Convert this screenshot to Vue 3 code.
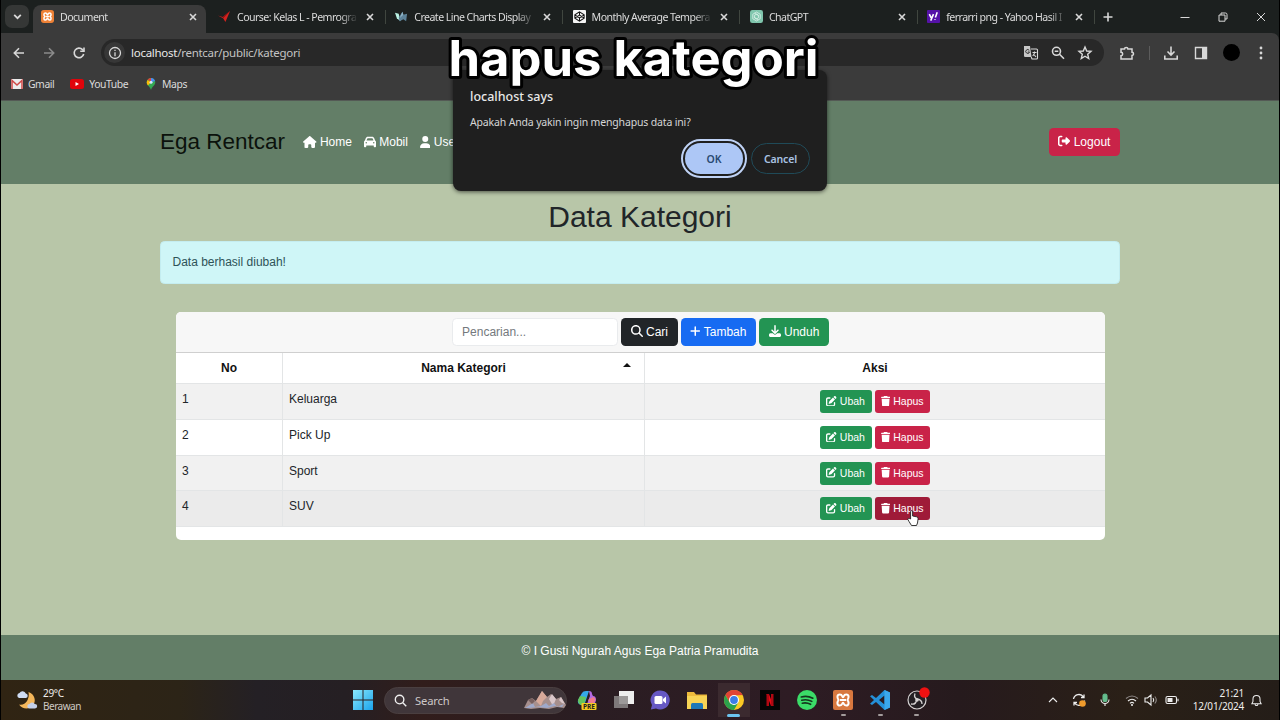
<template>
  <div class="desktop">
    <div class="browser">
      <div class="tab-strip">
        <div class="tab-search">
          <svg viewBox="0 0 10 10" class="ln"><path d="M2 3.5l3 3 3-3" /></svg>
        </div>
        <div v-for="tab in tabs" :key="tab.title" class="tab" :class="{ active: tab.active }">
          <svg v-if="tab.icon === 'xampp'" class="favicon" viewBox="0 0 14 14">
            <rect width="14" height="14" rx="3" fill="#ee8136" />
            <path d="M4.8 3.2c-2 0-2 2.3-.9 3.8-1.100 1.500-1.100 3.800.9 3.800s1.400-1.900 2.200-1.900.2 1.900 2.200 1.900 2-2.300.9-3.800c1.100-1.500 1.100-3.800-.9-3.800S7.800 5.100 7 5.100 6.800 3.200 4.800 3.200zM5 7h4" fill="none" stroke="#fff" stroke-width="1.600" />
          </svg>
          <svg v-else-if="tab.icon === 'course'" class="favicon" viewBox="0 0 14 14">
            <path d="M0 6l5 1.500L13 1 8 13 5.500 9z" fill="#d3221f" />
            <path d="M5 7.500L13 1 5.500 9z" fill="#7e1010" />
          </svg>
          <svg v-else-if="tab.icon === 'chart'" class="favicon" viewBox="0 0 14 14">
            <path d="M0 3l4 1 2 8-4-3z" fill="#b9f0e2" />
            <path d="M4 8l4-6 1 3 4-1-1 8-3-2-4 2z" fill="#5d8299" />
            <path d="M8 2l1 3-4 4z" fill="#8eb3c6" />
          </svg>
          <svg v-else-if="tab.icon === 'codepen'" class="favicon" viewBox="0 0 14 14">
            <rect width="14" height="14" rx="1" fill="#f4f4f4" />
            <path d="M7 2l5 3.200v3.600L7 12 2 8.800V5.200zM2 5.200l5 3.400 5-3.400M2 8.800l5-3.400 5 3.400M7 2v3.400M7 8.600V12" fill="none" stroke="#111" stroke-width="1.100" />
          </svg>
          <svg v-else-if="tab.icon === 'gpt'" class="favicon" viewBox="0 0 14 14">
            <rect width="14" height="14" rx="2.500" fill="#80c6ad" />
            <g fill="none" stroke="#e4f6ef" stroke-width=".8">
              <path d="M7 2.200l4 2.400v4.800l-4 2.400-4-2.400V4.600z" />
              <path d="M7 4.500l2.200 1.300v2.500L7 9.600 4.800 8.300V5.800zM5 3.500l4.200 2.400M9 10.500L4.800 8.100" />
            </g>
          </svg>
          <svg v-else class="favicon" viewBox="0 0 14 14">
            <rect width="14" height="14" rx="1" fill="#5512a8" />
            <path d="M2.500 4.500l2 4M7 4.500L4 11.500M9 8l2-5.500M8.600 9.600v1" fill="none" stroke="#fff" stroke-width="1.700" />
          </svg>
          <span class="tab-title">{{ tab.title }}</span>
          <svg class="tab-close" viewBox="0 0 8 8"><path d="M1 1l6 6M7 1L1 7" /></svg>
        </div>
        <svg class="new-tab" viewBox="0 0 10 10"><path d="M5 .5v9M.5 5h9" /></svg>
        <div class="window-controls">
          <svg viewBox="0 0 10 10"><path d="M.5 5.500h9" /></svg>
          <svg viewBox="0 0 10 10"><path d="M1 3h6v6.200H1zM3 3V1h4.500Q9 1 9 2.500V7H7" /></svg>
          <svg viewBox="0 0 10 10"><path d="M1 1l8 8M9 1L1 9" /></svg>
        </div>
      </div>

      <div class="toolbar">
        <svg class="tool" viewBox="0 0 16 16"><path d="M13 8H3.500M8 3.300L3.300 8 8 12.700" /></svg>
        <svg class="tool dim" viewBox="0 0 16 16"><path d="M3 8h9.500M8 3.300L12.700 8 8 12.700" /></svg>
        <svg class="tool" viewBox="0 0 16 16">
          <path d="M12.700 9A4.800 4.800 0 1 1 11.500 4.600L12.700 5.800" />
          <path d="M13 2.500v3.800H9.200" />
        </svg>
        <div class="omnibox">
          <span class="site-info">
            <svg viewBox="0 0 14 14"><circle cx="7" cy="7" r="5.500" /><path d="M7 6.300v4M7 3.700v1.300" /></svg>
          </span>
          <span class="url"><b>localhost</b>/rentcar/public/kategori</span>
          <svg class="box-icon" viewBox="0 0 16 16">
            <path d="M1 1h6l1.500 11H2.200Q1 12 1 11z" fill="#c8c8c8" stroke="none" />
            <path d="M8 4h5.500q1 0 1 1v8q0 1-1 1H9l-.8-2M9.500 7.500h4M11.500 6.500v1c0 1.600-1 2.600-1.800 3.300M10.500 9l2.500 3" stroke-width="1.100" />
            <path d="M6.300 5.500A1.900 1.900 0 1 0 6.500 7H4.800" stroke="#333" stroke-width="1" />
          </svg>
          <svg class="box-icon" viewBox="0 0 16 16"><circle cx="6.500" cy="6.300" r="4" /><path d="M9.500 9.300l4.500 4.500M4.700 6.300h3.600" /></svg>
          <svg class="box-icon" viewBox="0 0 16 16">
            <path d="M8 2l1.700 4 4.300.4-3.300 2.800 1 4.300L8 11.200l-3.700 2.300 1-4.300L2 6.400 6.300 6z" stroke-width="1.400" />
          </svg>
        </div>
        <svg class="ext" viewBox="0 0 16 16">
          <path d="M2 4h3.500a1.700 1.500 0 0 1 3.400 0H13v3.200a1.500 1.600 0 0 1 0 3.200V14H2v-3.300a1.700 1.700 0 0 0 0-3.400z" stroke-width="1.500" />
        </svg>
        <span class="tool-sep"></span>
        <svg class="side-icon" viewBox="0 0 16 16"><path d="M8 1.500v8.300M4.500 6.500L8 10l3.500-3.500M1.800 10.500V14h12.400v-3.500" /></svg>
        <svg class="side-icon" viewBox="0 0 16 16">
          <path d="M2.500 2.500h11v11h-11z" stroke-width="1.400" /><path d="M9 2.500h4.500v11H9z" fill="#d8d8d8" stroke="none" />
        </svg>
        <span class="avatar"></span>
        <svg class="side-icon" viewBox="0 0 16 16">
          <g fill="#d8d8d8" stroke="none"><circle cx="8" cy="3" r="1.400" /><circle cx="8" cy="8" r="1.400" /><circle cx="8" cy="13" r="1.400" /></g>
        </svg>
      </div>

      <div class="bookmarks">
        <span class="bookmark">
          <svg viewBox="0 0 12 12"><rect y="1" width="12" height="10" rx="1" fill="#ececec" /><path d="M1 11V2.500L6 7l5-4.500V11" fill="none" stroke="#cf4a48" stroke-width="1.500" /></svg>
          Gmail
        </span>
        <span class="bookmark youtube">
          <svg viewBox="0 0 14 12"><rect y="1" width="14" height="10" rx="2.500" fill="#e0040b" /><path d="M5.500 4v4L9 6z" fill="#fff" /></svg>
          YouTube
        </span>
        <span class="bookmark maps">
          <svg viewBox="0 0 12 12">
            <path d="M6 0a4.300 4.300 0 0 1 4.300 4.300C10.300 7.500 7 8.500 6 12 5 8.500 1.700 7.500 1.700 4.300A4.300 4.300 0 0 1 6 0z" fill="#34a853" />
            <path d="M6 0a4.300 4.300 0 0 1 4 3L6 4.300z" fill="#4a8bf5" />
            <path d="M2.500 1.700A4.300 4.300 0 0 1 6 0v4z" fill="#e34434" />
            <path d="M1.700 4.300Q1.700 6 3 7.500L6 4.300 2.500 2z" fill="#fbbc04" />
            <circle cx="6" cy="4.200" r="1.500" fill="#dbe7ff" />
          </svg>
          Maps
        </span>
      </div>
    </div>

    <div class="page">
      <nav class="navbar">
        <span class="brand">Ega Rentcar</span>
        <a class="nav-link"><Fa name="house" /> Home</a>
        <a class="nav-link"><Fa name="car" /> Mobil</a>
        <a class="nav-link"><Fa name="user" /> User</a>
        <a class="btn danger logout"><Fa name="logout" /> Logout</a>
      </nav>

      <main>
        <h1>Data Kategori</h1>
        <div class="alert">Data berhasil diubah!</div>
        <section class="card">
          <div class="card-header">
            <input type="text" placeholder="Pencarian..." />
            <a class="btn dark"><Fa name="search" /> Cari</a>
            <a class="btn primary"><Fa name="plus" /> Tambah</a>
            <a class="btn success"><Fa name="download" /> Unduh</a>
          </div>
          <table>
            <thead>
              <tr>
                <th class="col-no">No</th>
                <th class="col-name">Nama Kategori<i class="sort"></i></th>
                <th>Aksi</th>
              </tr>
            </thead>
            <tbody>
              <tr v-for="(nama, i) in kategori" :key="nama" :class="{ hover: i === hovered }">
                <td>{{ i + 1 }}</td>
                <td>{{ nama }}</td>
                <td class="actions">
                  <div class="action-group">
                    <a class="btn sm success"><Fa name="edit" /> Ubah</a>
                    <a class="btn sm danger" :class="{ pressed: i === hovered }"><Fa name="trash" /> Hapus</a>
                  </div>
                </td>
              </tr>
            </tbody>
          </table>
        </section>
      </main>

      <footer>© I Gusti Ngurah Agus Ega Patria Pramudita</footer>
    </div>

    <div class="taskbar">
      <div class="weather">
        <svg viewBox="0 0 22 20">
          <path d="M12.500 1.500c6 2 8.500 9 4 14-4 4-10.500 3-13.500-1.500 6 1.500 11-5 9.500-12.500z" fill="#f3b65a" />
          <path d="M3 7.500a2.600 2.600 0 0 1 .5-5A3.500 3.500 0 0 1 9.800 3 2.300 2.300 0 0 1 10 7.500z" fill="#cfdcf3" />
          <path d="M13.500 18a2.200 2.200 0 0 1 0-4.400 3 3 0 0 1 5.300-.2A2.300 2.300 0 0 1 19 18z" fill="#c3cfe9" />
        </svg>
        <div>
          <div>29°C</div>
          <div class="sky">Berawan</div>
        </div>
      </div>

      <svg class="start" viewBox="0 0 20 20">
        <defs><linearGradient id="win" x2="1" y2="1"><stop stop-color="#8be8fb" /><stop offset="1" stop-color="#1aa3ec" /></linearGradient></defs>
        <path d="M0 0h9.500v9.500H0zM10.500 0H20v9.500h-9.500zM0 10.500h9.500V20H0zM10.500 10.500H20V20h-9.500z" fill="url(#win)" />
      </svg>

      <div class="search">
        <svg class="lens" viewBox="0 0 14 14"><circle cx="6" cy="6" r="4.600" /><path d="M9.500 9.500l3.700 3.700" /></svg>
        <span>Search</span>
        <svg class="peaks" viewBox="0 0 42 20">
          <path d="M0 18l4-8 4-2 4 3 6-10 5 6 4-3 5 5 5-2 5 8-2 3-7-1-8 2-9-1-9 1z" fill="#a68f8d" />
          <path d="M12 11l6-10 5 6-4 4-2 5z" fill="#d8a999" />
          <path d="M25 9l3-5 4 5-3 7zM35 10l2-3 4 7-3-1z" fill="#d9c6c9" />
          <path d="M1 18l8-5 2 4 6-1 5-3 3 3 5-3 3 4 7-3-2 3-7-1-8 2-9-1-9 1z" fill="#9fa9cb" />
          <path d="M4 10l4-2 3 3-3 3z" fill="#78605f" />
        </svg>
      </div>

      <div class="apps">
        <span class="app">
          <svg viewBox="0 0 20 20">
            <path d="M5 3q1-2 4-2h3L8 13q-1 3-4 2-4-1-3-5z" fill="#35a9e8" />
            <path d="M1 10l2-4 6 1-2 8q-6 1-6-5z" fill="#65c45b" />
            <path d="M12 1q3 0 3 3l1 2q3 0 3 4-1 6-6 5l-3-1 3-8z" fill="#b36ae3" />
            <path d="M11 10l5-3q3 1 2 4l-3 4z" fill="#f17c8c" />
            <rect x="4.500" y="13" width="15" height="7" rx="1" fill="#f6ca22" />
            <text x="12" y="18.800" text-anchor="middle" class="pre">PRE</text>
          </svg>
        </span>
        <span class="app">
          <svg viewBox="0 0 20 20"><rect x="5" y="1" width="15" height="13" fill="#eee" /><rect y="6" width="14" height="12" fill="#8d8989" opacity=".85" /></svg>
        </span>
        <span class="app">
          <svg viewBox="0 0 20 20">
            <path d="M10 .5a9.500 9.500 0 1 1-4 18L.8 19.500 2 15A9.500 9.500 0 0 1 10 .5z" fill="#6658c4" />
            <rect x="4.500" y="6" width="8" height="8" rx="1.500" fill="#fff" /><path d="M13 9l3-2.500v7L13 11z" fill="#fff" />
          </svg>
        </span>
        <span class="app">
          <svg viewBox="0 0 20 20">
            <path d="M0 2h7l2 2.500h11V19H0z" fill="#eebb3c" /><path d="M0 6h20v13H0z" fill="#f7d456" />
            <path d="M4 19v-4.500Q4 13 5.500 13h9q1.500 0 1.500 1.500V19z" fill="#1d78b8" />
          </svg>
        </span>
        <span class="app current">
          <svg viewBox="0 0 20 20">
            <circle cx="10" cy="10" r="10" fill="#fbc924" />
            <path d="M1.340 5A10 10 0 0 1 18.660 5L10 5.500 5.700 12.500z" fill="#e04435" />
            <path d="M1.340 5A10 10 0 0 0 10 20L14.330 12.500 5.670 12.500z" fill="#2ba24c" />
            <circle cx="10" cy="10" r="5" fill="#fff" /><circle cx="10" cy="10" r="3.900" fill="#3b7de8" />
          </svg>
        </span>
        <span class="app">
          <svg viewBox="0 0 20 20"><rect width="20" height="20" fill="#050505" /><path d="M6.500 4H9l4.500 12H11z" fill="#e50914" /><path d="M6.500 4H9v12H6.500zM11 4h2.500v12H11z" fill="#b00812" /></svg>
        </span>
        <span class="app">
          <svg viewBox="0 0 20 20">
            <circle cx="10" cy="10" r="10" fill="#3bdc68" />
            <path d="M4.300 7q6-1.600 11.600 1.200M4.800 10.200q5.200-1.400 10 1.200M5.300 13.200q4.400-1 8.300 1.100" fill="none" stroke="#15351d" stroke-width="1.600" stroke-linecap="round" />
          </svg>
        </span>
        <span class="app open">
          <svg viewBox="0 0 20 20">
            <rect width="20" height="20" rx="2" fill="#d8783f" />
            <path d="M6.800 4.500c-3 0-2.800 3.300-1.300 5.500-1.500 2.200-1.700 5.500 1.300 5.500s2-2.700 3.200-2.700.2 2.700 3.200 2.700 2.800-3.300 1.300-5.500c1.500-2.200 1.700-5.500-1.300-5.500S11.200 7.200 10 7.200 9.800 4.500 6.800 4.500zM7 10h6" fill="none" stroke="#fff" stroke-width="2" />
          </svg>
        </span>
        <span class="app open">
          <svg viewBox="0 0 20 20">
            <path d="M14.500 0L20 2.500v15L14.500 20 6 12l-4 3-2-1.200L4 10 0 6.200 2 5l4 3zM14.500 5.500L9 10l5.500 4.500z" fill="#2490d8" fill-rule="evenodd" />
            <path d="M14.500 0L20 2.500v15L14.500 20z" fill="#3ba8ec" />
          </svg>
        </span>
        <span class="app open">
          <svg viewBox="0 0 20 20" class="obs">
            <circle cx="10" cy="10" r="9" fill="#242024" stroke="#d5d2d2" stroke-width="1.200" />
            <path d="M8 3.500q-1.500 4.500 2.500 5.500M10.500 9q4.500 1 4.500 5M9.500 10.500q-1 4.500-5.500 3.500" fill="none" stroke="#d5d2d2" stroke-width="1.300" />
            <circle cx="10" cy="10" r="1.800" fill="#d5d2d2" />
            <circle cx="17.500" cy="2.500" r="5.200" fill="#ee1111" />
          </svg>
        </span>
      </div>

      <div class="tray">
        <svg viewBox="0 0 14 14"><path d="M3 9l4-4 4 4" /></svg>
        <svg viewBox="0 0 14 14">
          <path d="M1.500 6A5.500 5.500 0 0 1 11.500 4M12 1.500V4.500H9M12.500 7.500A5.500 5.500 0 0 1 2.500 10M2 12.500V9.500h3" stroke-width="1.300" />
          <circle cx="10.500" cy="10.500" r="3.300" fill="#ef9b2c" stroke="none" />
        </svg>
        <svg viewBox="0 0 14 14"><rect x="5" y="1" width="4" height="7.500" rx="2" fill="#64bd8d" stroke="#64bd8d" /><path d="M3 6.500a4 4 0 0 0 8 0M7 10.500V13" /></svg>
        <svg class="wifi" viewBox="0 0 14 14">
          <path d="M1 5.500Q7 .5 13 5.500" stroke="#8d8785" /><path d="M3 8q4-3.500 8 0M5 10.300q2-1.800 4 0" />
          <circle cx="7" cy="12" r="1" fill="#eee" stroke="none" />
        </svg>
        <svg class="sound" viewBox="0 0 14 14"><path d="M1 5h2.500L7 2v10L3.500 9H1zM9 5q1.500 2 0 4" /><path d="M10.800 3.500q3 3.500 0 7" stroke="#8d8785" /></svg>
        <svg class="battery" viewBox="0 0 14 14"><rect x="1" y="3.500" width="10.500" height="7" rx="1.500" /><path d="M2.500 5h5v4h-5z" fill="#eee" stroke="none" /><path d="M13 5.800v2.400" /></svg>
        <div class="clock">
          <div>21:21</div>
          <div>12/01/2024</div>
        </div>
        <svg class="bell" viewBox="0 0 14 14"><path d="M2 10.500L3.200 8V5.500a3.800 3.800 0 0 1 7.600 0V8l1.200 2.500zM5.500 11a1.500 1.500 0 0 0 3 0" /></svg>
      </div>
    </div>

    <div class="dialog">
      <div class="dialog-title">localhost says</div>
      <p>Apakah Anda yakin ingin menghapus data ini?</p>
      <div class="dialog-buttons">
        <button class="ok">OK</button>
        <button class="cancel">Cancel</button>
      </div>
    </div>

    <svg class="caption" viewBox="0 0 400 70">
      <text x="8.500" y="46" textLength="370" lengthAdjust="spacingAndGlyphs">hapus kategori</text>
    </svg>

    <svg class="cursor" viewBox="0 0 12 16">
      <path d="M3.600 9V1.800q0-1.200 1-1.200t1 1.200V6l4 .8q1.700.4 1.500 2L10.500 13 9.500 15.500h-5L2 11.500.8 9.300q.2-1.400 1.600-.8z" fill="#fff" stroke="#222" stroke-width=".9" />
    </svg>
  </div>
</template>

<script setup>
import { h } from 'vue';

const tabs = [
  { title: 'Document', icon: 'xampp', active: true },
  { title: 'Course: Kelas L - Pemrogra', icon: 'course' },
  { title: 'Create Line Charts Display', icon: 'chart' },
  { title: 'Monthly Average Tempera', icon: 'codepen' },
  { title: 'ChatGPT', icon: 'gpt' },
  { title: 'ferrarri png - Yahoo Hasil I', icon: 'yahoo' },
];

const kategori = ['Keluarga', 'Pick Up', 'Sport', 'SUV'];
const hovered = 3;

// [ancho del viewBox, path]
const glyphs = {
  house: [576, 'M575.8 255.5c0 18-15 32.1-32 32.1h-32l.7 160.2c0 2.700-.2 5.400-.5 8.100V472c0 22.100-17.900 40-40 40H456c-1.100 0-2.200 0-3.300-.1c-1.400 .1-2.800 .1-4.200 .1H416 392c-22.100 0-40-17.900-40-40V448 384c0-17.700-14.300-32-32-32H256c-17.700 0-32 14.300-32 32v64 24c0 22.100-17.900 40-40 40H160 128.100c-1.500 0-3-.1-4.500-.2c-1.200 .1-2.400 .2-3.600 .2H104c-22.100 0-40-17.900-40-40V360c0-.9 0-1.900 .1-2.800V287.600H32c-18 0-32-14-32-32.100c0-9 3-17 10-24L266.400 8c7-7 15-8 22-8s15 2 21 7L564.800 231.500c8 7 12 15 11 24z'],
  car: [512, 'M135.2 117.4L109.1 192H402.9l-26.1-74.6C372.3 104.6 360.2 96 346.6 96H165.4c-13.6 0-25.7 8.6-30.2 21.4zM39.6 196.8L74.8 96.3C88.3 57.8 124.6 32 165.4 32H346.6c40.8 0 77.1 25.8 90.6 64.3l35.2 100.5c23.2 9.6 39.6 32.5 39.6 59.2V400v48c0 17.7-14.3 32-32 32H448c-17.7 0-32-14.3-32-32V400H96v48c0 17.7-14.3 32-32 32H32c-17.7 0-32-14.3-32-32V400 256c0-26.7 16.4-49.6 39.6-59.2zM128 288a32 32 0 1 0 -64 0 32 32 0 1 0 64 0zm288 32a32 32 0 1 0 0-64 32 32 0 1 0 0 64z'],
  user: [448, 'M224 256A128 128 0 1 0 224 0a128 128 0 1 0 0 256zm-45.7 48C79.8 304 0 383.8 0 482.3C0 498.7 13.3 512 29.7 512H418.3c16.4 0 29.7-13.3 29.7-29.7C448 383.8 368.2 304 269.7 304H178.3z'],
  logout: [512, 'M377.9 105.9L500.7 228.7c7.2 7.2 11.3 17.1 11.3 27.3s-4.1 20.1-11.3 27.3L377.9 406.1c-6.4 6.4-15 9.9-24 9.9c-18.7 0-33.9-15.2-33.9-33.9l0-62.1-128 0c-17.7 0-32-14.3-32-32l0-64c0-17.7 14.3-32 32-32l128 0 0-62.1c0-18.7 15.2-33.9 33.9-33.9c9 0 17.6 3.6 24 9.9zM160 96L96 96c-17.7 0-32 14.3-32 32l0 256c0 17.7 14.3 32 32 32l64 0c17.7 0 32 14.3 32 32s-14.3 32-32 32l-64 0c-53 0-96-43-96-96L0 128C0 75 43 32 96 32l64 0c17.7 0 32 14.3 32 32s-14.3 32-32 32z'],
  search: [512, 'M416 208c0 45.9-14.9 88.3-40 122.7L502.6 457.4c12.5 12.5 12.5 32.8 0 45.3s-32.8 12.5-45.3 0L330.7 376c-34.4 25.2-76.8 40-122.7 40C93.1 416 0 322.9 0 208S93.1 0 208 0S416 93.1 416 208zM208 352a144 144 0 1 0 0-288 144 144 0 1 0 0 288z'],
  plus: [448, 'M256 80c0-17.7-14.3-32-32-32s-32 14.3-32 32V224H48c-17.7 0-32 14.3-32 32s14.3 32 32 32H192V432c0 17.7 14.3 32 32 32s32-14.3 32-32V288H400c17.7 0 32-14.3 32-32s-14.3-32-32-32H256V80z'],
  download: [512, 'M288 32c0-17.7-14.3-32-32-32s-32 14.3-32 32V274.7l-73.4-73.4c-12.5-12.5-32.8-12.5-45.3 0s-12.5 32.8 0 45.3l128 128c12.5 12.5 32.8 12.5 45.3 0l128-128c12.5-12.5 12.5-32.8 0-45.3s-32.8-12.5-45.3 0L288 274.7V32zM64 352c-35.3 0-64 28.7-64 64v32c0 35.3 28.7 64 64 64H448c35.3 0 64-28.7 64-64V416c0-35.3-28.7-64-64-64H346.5l-45.3 45.3c-25 25-65.5 25-90.5 0L165.5 352H64z'],
  edit: [512, 'M471.6 21.7c-21.9-21.9-57.3-21.9-79.2 0L362.3 51.7l97.9 97.9 30.1-30.1c21.9-21.9 21.9-57.3 0-79.2L471.6 21.7zm-299.2 220c-6.1 6.1-10.8 13.6-13.5 21.9l-29.6 88.8c-2.9 8.6-.6 18.1 5.8 24.6s15.9 8.7 24.6 5.8l88.8-29.6c8.2-2.7 15.7-7.4 21.9-13.5L437.7 172.3 339.7 74.3 172.4 241.7zM96 64C43 64 0 107 0 160V416c0 53 43 96 96 96H352c53 0 96-43 96-96V320c0-17.7-14.3-32-32-32s-32 14.3-32 32v96c0 17.7-14.3 32-32 32H96c-17.7 0-32-14.3-32-32V160c0-17.7 14.3-32 32-32h96c17.7 0 32-14.3 32-32s-14.3-32-32-32H96z'],
  trash: [448, 'M135.2 17.7L128 32H32C14.3 32 0 46.3 0 64S14.3 96 32 96H416c17.7 0 32-14.3 32-32s-14.3-32-32-32H320l-7.2-14.3C307.4 6.8 296.3 0 284.2 0H163.8c-12.1 0-23.2 6.8-28.6 17.7zM416 128H32L53.2 467c1.6 25.3 22.6 45 47.9 45H346.9c25.3 0 46.3-19.7 47.9-45L416 128z'],
};

const Fa = ({ name }) =>
  h('svg', { class: 'fa', viewBox: `0 0 ${glyphs[name][0]} 512` }, [h('path', { d: glyphs[name][1] })]);
Fa.props = ['name'];
</script>

<style>
body {
  margin: 0;
  overflow: hidden;
  background: #000;
}
</style>

<style scoped>
* {
  box-sizing: border-box;
}
.desktop {
  position: relative;
  display: flex;
  flex-direction: column;
  width: 1280px;
  height: 720px;
  padding: 0 1px;
  overflow: hidden;
  background: #000;
  font-family: "Noto Sans", "Open Sans", sans-serif;
}
svg {
  display: block;
  flex: none;
}

/* Navegador */
.browser {
  height: 101px;
  color: #dcdcdc;
  background: #1c201f;
  border-bottom: 1px solid #545a55;
}
.browser svg {
  fill: none;
  stroke: #d8d8d8;
  stroke-width: 1.6;
}
.browser .favicon,
.browser .bookmark svg {
  stroke: none;
}
.tab-strip {
  display: flex;
  align-items: center;
  height: 33px;
  padding-left: 4px;
}
.tab-search {
  display: grid;
  place-items: center;
  width: 24px;
  height: 23px;
  margin-right: 4px;
  border-radius: 7px;
  background: #353736;
}
.tab-search svg {
  width: 11px;
}
.tab {
  display: flex;
  align-items: center;
  width: 177.300px;
  height: 28px;
  padding: 0 12px 5px 9.500px;
  align-self: flex-end;
}
.tab:not(.active) {
  background: linear-gradient(#40463f, #40463f) right 5px / 1px 14px no-repeat;
}
.tab.active {
  width: 173px;
  margin-right: 2.500px;
  padding: 0 9px 5px 8px;
  border-radius: 8px 8px 0 0;
  background: #3b3b3b;
}
.favicon {
  width: 13px;
  height: 13px;
}
.tab-title {
  flex: 1;
  margin: 0 8px 0 6px;
  overflow: hidden;
  font-size: 10.600px;
  letter-spacing: -0.55px;
  white-space: nowrap;
  mask-image: linear-gradient(90deg, #000 85%, transparent);
}
.tab-close {
  width: 8px;
}
.new-tab {
  width: 10px;
  margin-left: 8px;
}
.window-controls {
  display: flex;
  gap: 28px;
  margin-left: auto;
  margin-right: 13px;
}
.window-controls svg {
  width: 10px;
  stroke-width: 1;
}
.toolbar {
  display: flex;
  align-items: center;
  height: 39px;
  padding: 0 0 0 10px;
  background: #3b3b3b;
  border-radius: 0 7px 0 0;
}
.tool {
  width: 16px;
  margin-right: 14px;
}
.tool.dim {
  opacity: 0.5;
}
.omnibox {
  display: flex;
  flex: none;
  align-items: center;
  width: 1003px;
  height: 27px;
  padding: 0 11px 0 3px;
  border-radius: 14px;
  background: #282828;
}
.site-info {
  display: grid;
  place-items: center;
  width: 21px;
  height: 21px;
  margin-right: 6px;
  border-radius: 50%;
  background: #373737;
}
.site-info svg {
  width: 14px;
  stroke-width: 1.3;
}
.url {
  flex: 1;
  color: #c4c4c4;
  font-size: 11.500px;
  letter-spacing: -0.27px;
}
.url b {
  font-weight: 400;
  color: #e8e8e8;
}
.box-icon {
  width: 16px;
  margin-left: 11px;
}
.ext {
  width: 16px;
  margin-left: 15px;
}
.tool-sep {
  width: 1px;
  height: 14px;
  margin: 0 13px 0 14px;
  background: #5c5c5c;
}
.side-icon {
  width: 16px;
  margin-right: 14px;
}
.side-icon:last-child {
  margin-right: 0;
}
.avatar {
  width: 17px;
  height: 17px;
  margin-right: 13px;
  border-radius: 50%;
  background: #000;
  flex: none;
}
.bookmarks {
  display: flex;
  align-items: center;
  height: 28px;
  padding: 0 0 5px 10px;
  background: #3b3b3b;
}
.bookmark {
  display: flex;
  align-items: center;
  gap: 5px;
  font-size: 10.400px;
  letter-spacing: -0.45px;
}
.bookmark svg {
  height: 12px;
}
.bookmark.youtube {
  margin-left: 16px;
}
.bookmark.maps {
  margin-left: 17px;
}

/* Halaman */
.page {
  display: flex;
  flex-direction: column;
  height: 579px;
  background: #b8c6a8;
  color: #212529;
  font: 12px/18px "Liberation Sans", Arial, sans-serif;
}
.fa {
  display: inline-block;
  height: 1em;
  vertical-align: -0.125em;
  fill: currentColor;
}
.navbar {
  display: flex;
  align-items: center;
  height: 83px;
  padding: 0 159px 1px;
  background: #637e67;
}
.brand {
  margin-right: 12px;
  color: #0b120c;
  font-size: 22.500px;
}
.nav-link {
  padding: 0 6px;
  color: #fff;
}
.btn {
  padding: 4.500px 8.600px;
  border: 0.750px solid transparent;
  border-radius: 4.500px;
  color: #fff;
  line-height: 17px;
  white-space: nowrap;
}
.btn.sm {
  padding: 3px 5.600px;
  border-radius: 3px;
  font-size: 10.500px;
  line-height: 15px;
}
.danger {
  background: #c92348;
}
.danger.pressed {
  background: #9f1b38;
}
.success {
  background: #239453;
}
.primary {
  background: #176bf2;
}
.dark {
  background: #212528;
}
.logout {
  margin-left: auto;
}
main {
  flex: 1;
  padding: 15px 159px 0;
}
h1 {
  margin: 0 0 6px;
  font-size: 30px;
  font-weight: 400;
  line-height: 36px;
  text-align: center;
}
.alert {
  height: 43px;
  padding: 11px 11.500px;
  border: 1px solid #c4edf0;
  border-radius: 4.500px;
  background: #cff6f7;
  color: #2e5358;
}
.card {
  width: 929px;
  height: 228px;
  margin: 28px auto 0 16px;
  overflow: hidden;
  border-radius: 5px;
  background: #fff;
}
.card-header {
  display: flex;
  align-items: center;
  justify-content: center;
  gap: 3px;
  height: 41px;
  border-bottom: 1px solid #cfcfcf;
  background: #f7f7f7;
}
.card-header input {
  width: 166px;
  height: 28px;
  padding: 0 9px;
  border: 1px solid #e9ebed;
  border-radius: 4.500px;
  background: #fff;
  font: inherit;
}
.card-header input::placeholder {
  color: #74797d;
}
table {
  width: 929px;
  border-collapse: separate;
  border-spacing: 0;
  table-layout: fixed;
}
th,
td {
  border-right: 1px solid #e3e5e6;
  border-bottom: 1px solid #e3e5e6;
}
th:last-child,
td:last-child {
  border-right: 0;
}
th {
  position: relative;
  height: 31px;
  padding: 0;
  color: #111;
}
.col-no {
  width: 107px;
}
.col-name {
  width: 362px;
}
.sort {
  position: absolute;
  right: 13px;
  top: 10px;
  border: 4px solid transparent;
  border-top: 0;
  border-bottom-color: #111;
}
td {
  height: 35.800px;
  padding: 6px;
  vertical-align: top;
}
td.actions {
  padding: 6px 0 0;
}
.action-group {
  display: flex;
  justify-content: center;
  gap: 3px;
}
tbody tr:nth-child(odd) {
  background: #f1f1f1;
}
tbody tr.hover {
  background: #ebebeb;
}
footer {
  height: 45px;
  padding-top: 7px;
  background: #637e67;
  color: #fff;
  text-align: center;
}

/* Taskbar */
.taskbar {
  display: flex;
  align-items: center;
  height: 40px;
  color: #f0eeec;
  background: linear-gradient(90deg, #302413, #2c2417 14%, #242025 20%, #251f23 27%, #311d1b 33%, #2a1d22 45%, #2e1c24 62%, #261a1d 75%, #2a2017 88%, #241d18);
}
.weather {
  display: flex;
  gap: 5px;
  width: 352px;
  padding-left: 15px;
  font-size: 10px;
  letter-spacing: -0.3px;
  line-height: 13px;
}
.weather svg {
  width: 22px;
  margin-top: 1px;
}
.sky {
  letter-spacing: -0.5px;
  color: #cfcac4;
}
.start {
  width: 20px;
  height: 20px;
}
.search {
  display: flex;
  align-items: center;
  width: 183px;
  height: 27px;
  margin-left: 11px;
  padding-left: 9px;
  border: 1px solid #4a3f40;
  border-radius: 14px;
  background: #40363a;
  color: #cdc8c8;
  font-size: 11.200px;
  letter-spacing: -0.15px;
}
.lens {
  width: 13px;
  margin-right: 8px;
  fill: none;
  stroke: #eee;
  stroke-width: 1.5;
}
.peaks {
  width: 42px;
  margin-left: auto;
}
.apps {
  display: flex;
  margin-left: 2px;
}
.app {
  display: flex;
  flex-direction: column;
  align-items: center;
  justify-content: center;
  position: relative;
  width: 36.600px;
  height: 36px;
}
.app svg {
  width: 20px;
  height: 20px;
}
.app.current {
  background: linear-gradient(#3b2a2f, #3b2a2f) center / 32px 34px no-repeat;
}
.app.open::after,
.app.current::after {
  content: '';
  position: absolute;
  bottom: 2px;
  width: 5px;
  height: 2px;
  border-radius: 2px;
  background: #a39c9c;
}
.app.current::after {
  width: 13px;
  height: 3px;
  bottom: 1px;
  background: #6cc4ef;
}
.obs {
  overflow: visible;
}
.pre {
  font: 700 6.500px "Noto Sans", sans-serif;
  fill: #222;
}
.tray {
  display: flex;
  align-items: center;
  margin-left: auto;
  padding-right: 16px;
}
.tray svg {
  width: 14px;
  margin-right: 12.300px;
  fill: none;
  stroke: #eee;
  stroke-width: 1.1;
}
.tray .wifi {
  margin-right: 5px;
}
.tray .sound {
  margin-right: 7px;
}
.tray .bell {
  width: 13px;
  margin-right: 0;
}
.clock {
  margin-left: 2px;
  margin-right: 6px;
  font-size: 10px;
  letter-spacing: -0.2px;
  line-height: 13px;
  text-align: right;
}

/* Confirm */
.dialog {
  position: absolute;
  left: 453px;
  top: 70px;
  width: 374px;
  height: 121px;
  padding: 18px 17px 0;
  border-radius: 8px;
  background: #1f1f1f;
  box-shadow: 0 1px 4px rgba(0, 0, 0, 0.6);
  color: #d6d6d6;
  font-size: 10.500px;
}
.dialog-title {
  color: #e8e8e8;
  font-size: 12.500px;
  font-weight: 500;
  line-height: 18px;
}
.dialog p {
  margin: 8px 0 0;
  letter-spacing: -0.16px;
  line-height: 16px;
}
.dialog-buttons {
  display: flex;
  justify-content: flex-end;
  gap: 8px;
  margin-top: 13px;
}
.dialog-buttons button {
  height: 31px;
  padding: 0;
  border-radius: 16px;
  font: 600 10.500px "Noto Sans", sans-serif;
  letter-spacing: -0.15px;
}
.ok {
  width: 58px;
  border: 0;
  background: #adc7f6;
  color: #294a72;
  outline: 2px solid #bfd2f5;
  outline-offset: 2px;
}
.cancel {
  width: 59px;
  border: 1px solid #1f4a58;
  background: none;
  color: #a9c2e2;
}
.caption {
  position: absolute;
  left: 440px;
  top: 30px;
  width: 400px;
  height: 70px;
}
.caption text {
  font: 700 50px Inter, sans-serif;
  fill: #fff;
  stroke: #000;
  stroke-width: 6px;
  stroke-linejoin: round;
  paint-order: stroke;
}
.cursor {
  position: absolute;
  left: 907px;
  top: 510px;
  width: 12px;
  height: 16px;
}
</style>
